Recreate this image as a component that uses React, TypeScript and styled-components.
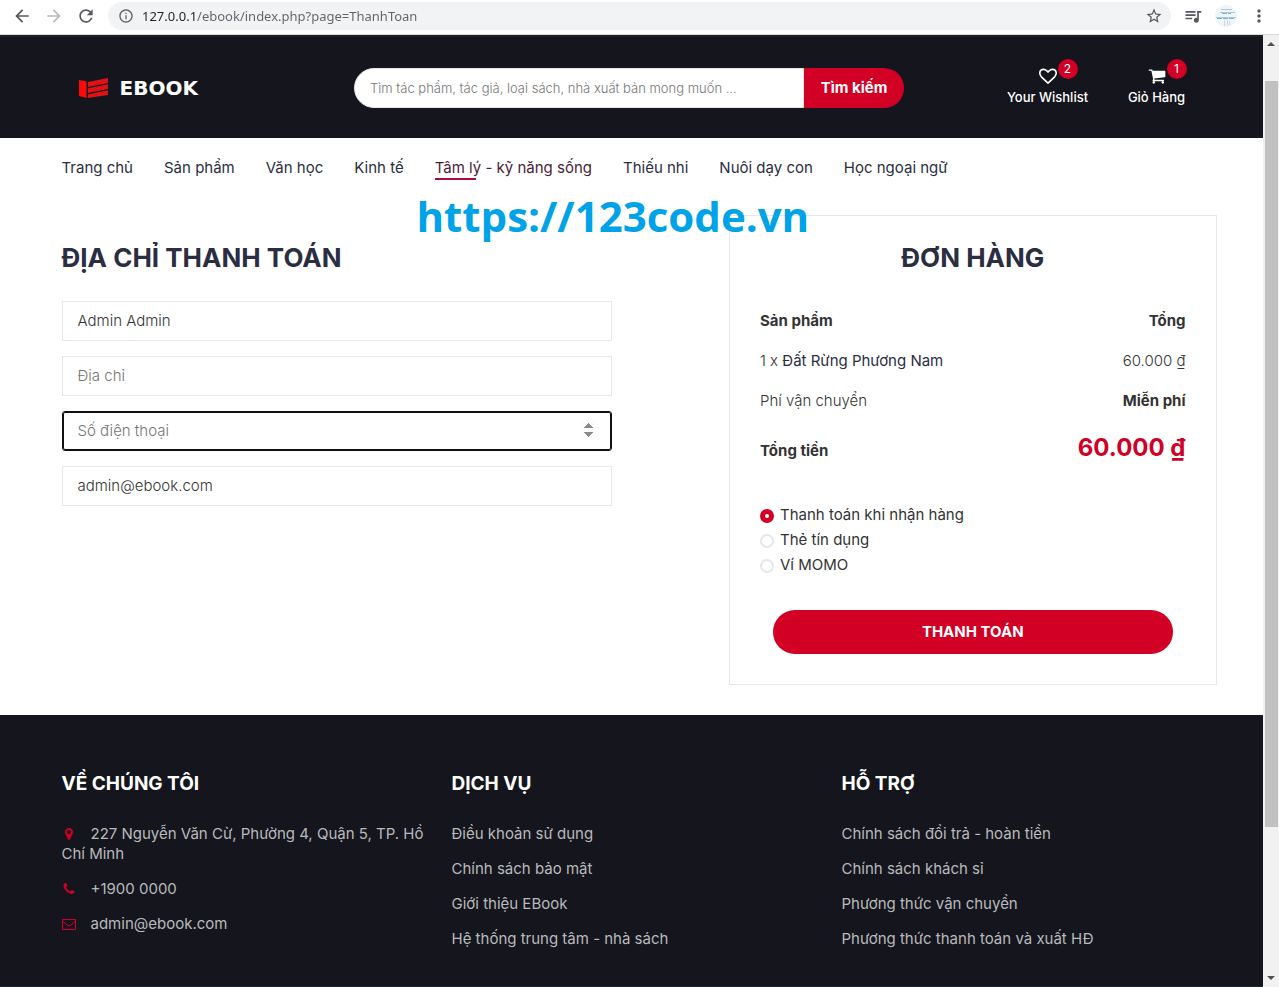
import React from "react";
import styled, { createGlobalStyle } from "styled-components";
import { MdArrowBack, MdArrowForward, MdRefresh, MdInfoOutline, MdStarBorder, MdQueueMusic, MdMoreVert } from "react-icons/md";

const RED = "#d10024";
const DARK = "#15161d";

const GlobalStyle = createGlobalStyle`
  *, *::before, *::after { box-sizing: border-box; }
  body {
    margin: 0;
    background: #fff;
    color: #333;
    font: 400 15px/20px Inter, "Liberation Sans", sans-serif;
  }
  button, input { font: inherit; }
  a { color: inherit; text-decoration: none; }
  h1, h2, h3, ul, p { margin: 0; padding: 0; }
  ul { list-style: none; }
`;

const Browser = styled.div`
  display: flex;
  flex-direction: column;
  min-height: 100vh;
`;

const Toolbar = styled.div`
  display: flex;
  align-items: center;
  height: 35px;
  padding: 0 10px 2px 12px;
  gap: 12px;
  background: #fff;
  border-bottom: 1px solid #d5d7da;
`;

const ToolButton = styled.button<{ $faded?: boolean }>`
  display: flex;
  flex: none;
  padding: 0;
  border: 0;
  background: none;
  color: ${(p) => (p.$faded ? "#b9bbbe" : "#55585c")};
  font-size: 20px;
`;

const AddressBar = styled.div`
  display: flex;
  flex: 1;
  align-items: center;
  gap: 8px;
  height: 28px;
  padding: 0 8px 0 10px;
  border-radius: 14px;
  background: #f1f3f4;
  color: #5f6368;
  font-size: 16px;
`;

const Address = styled.input`
  flex: 1;
  min-width: 0;
  padding: 0;
  border: 0;
  outline: 0;
  background: linear-gradient(to right, #202124 55px, #5f6368 55px);
  background-clip: text;
  color: transparent;
  font: 400 13px/20px "Noto Sans", sans-serif;
`;

const Avatar = styled.svg`
  flex: none;
  width: 22px;
  height: 22px;
`;

const Viewport = styled.div`
  display: flex;
  flex: 1;
`;

const Page = styled.div`
  display: flex;
  flex: 1;
  flex-direction: column;
  min-width: 0;
`;

const ScrollBar = styled.div`
  display: flex;
  flex: none;
  flex-direction: column;
  align-items: center;
  justify-content: space-between;
  width: 16px;
  background: #f1f1f1;
`;

const ScrollThumb = styled.div`
  flex: 1;
  width: 13px;
  margin: 29px 0 143px;
  background: #c1c1c1;
`;

const ScrollArrow = styled.svg`
  flex: none;
  width: 17px;
  height: 17px;
  fill: #505050;
`;

const Container = styled.div`
  width: 100%;
  max-width: 1170px;
  margin: 0 auto;
  padding: 0 15px;
`;

const Header = styled.header`
  background: ${DARK};
  border-top: 2px solid #1e1f29;
`;

const HeaderRow = styled(Container)`
  display: grid;
  grid-template-columns: 1fr 2fr 1fr;
  align-items: center;
  height: 101px;
  padding: 0;
`;

const Logo = styled.a`
  display: flex;
  align-items: center;
  gap: 12px;
  padding-left: 32px;
  color: #fff;
  font: 700 20px/20px "DejaVu Sans", sans-serif;
`;

const SearchForm = styled.form`
  display: flex;
  max-width: 550px;
  height: 40px;
  width: 100%;
  margin-left: 15px;
`;

const SearchInput = styled.input`
  flex: 1;
  min-width: 0;
  padding: 0 15px;
  border: 1px solid #e4e7ed;
  border-radius: 40px 0 0 40px;
  background: #fff;
  font-size: 13px;
  font-weight: 300;
  &::placeholder { color: #757575; opacity: 1; }
`;

const SearchButton = styled.button`
  width: 100px;
  padding: 0;
  border: 0;
  border-radius: 0 40px 40px 0;
  background: ${RED};
  color: #fff;
  font-size: 15px;
  font-weight: 700;
`;

const HeaderLinks = styled.div`
  display: flex;
  justify-content: flex-end;
  gap: 19px;
  padding: 0 15px 2px 0;
`;

const HeaderLink = styled.a`
  position: relative;
  display: flex;
  flex-direction: column;
  align-items: center;
  gap: 2px;
  width: 90px;
  color: #fff;
  font-size: 13px;
  font-weight: 500;
  white-space: nowrap;
  svg { width: 18px; height: 18px; }
`;

const Badge = styled.span`
  position: absolute;
  top: -8px;
  left: 55px;
  width: 20px;
  height: 20px;
  border-radius: 50%;
  background: ${RED};
  font-size: 12px;
  font-weight: 400;
  text-align: center;
`;

const Nav = styled(Container).attrs({ as: "nav" })`
  display: flex;
  flex-wrap: wrap;
  gap: 31px;
  padding-top: 20px;
`;

const NavLink = styled.a<{ $active?: boolean }>`
  position: relative;
  color: ${(p) => (p.$active ? "#4c1b3a" : "#2b2d42")};
  &::after {
    content: "";
    position: absolute;
    top: 20px;
    left: 0;
    width: ${(p) => (p.$active ? "41px" : "0")};
    height: 2px;
    background: #a80c3b;
  }
`;

const Checkout = styled.main`
  position: relative;
  display: grid;
  grid-template-columns: 7fr 5fr;
  width: 100%;
  max-width: 1170px;
  margin: 37px auto 30px;
`;

const Watermark = styled.div`
  position: absolute;
  top: -27px;
  left: 370px;
  color: #00a2e8;
  font: 700 42px/56px "Open Sans", sans-serif;
  white-space: nowrap;
`;

const Title = styled.h2<{ $center?: boolean }>`
  margin-bottom: 31px;
  color: #2b2d42;
  font-size: 26px;
  line-height: 24px;
  font-weight: 700;
  text-align: ${(p) => (p.$center ? "center" : "left")};
`;

const BillingForm = styled.form`
  display: flex;
  flex-direction: column;
  gap: 15px;
  padding: 31px 15px 0;
  ${Title} { margin-bottom: 16px; }
`;

const Field = styled.input`
  width: 100%;
  max-width: 550px;
  height: 40px;
  padding: 0 15px 2px;
  border: 1px solid #e4e7ed;
  border-radius: 0;
  background: #fff;
  color: #333;
  font-weight: 300;
  &::placeholder { color: #757575; opacity: 1; }
  &:focus {
    border-color: #101010;
    border-radius: 3px;
    outline: 1px solid #101010;
    outline-offset: -2px;
  }
  &::-webkit-inner-spin-button { opacity: 1; }
`;

const Order = styled.section`
  padding: 30px;
  border: 1px solid #e4e7ed;
`;

const OrderTable = styled.table`
  width: 100%;
  border-collapse: collapse;
  th, td { height: 40px; padding: 0; text-align: left; font-weight: 300; }
  th { font-weight: 700; }
  td:last-child, th:last-child { text-align: right; }
  tfoot th, tfoot td { height: 60px; }
  a { color: #2b2d42; font-weight: 400; }
`;

const Total = styled.strong`
  display: block;
  padding-bottom: 6px;
  color: ${RED};
  font-size: 24px;
  line-height: 24px;
  font-weight: 700;
`;

const Payments = styled.div`
  display: flex;
  flex-direction: column;
  margin: 21px 0 33px;
`;

const Payment = styled.label`
  display: flex;
  align-items: center;
  gap: 6px;
  height: 25px;
`;

const Radio = styled.input`
  appearance: none;
  width: 14px;
  height: 14px;
  margin: 2px 0 0;
  border: 2px solid #e4e7ed;
  border-radius: 50%;
  background: #fff;
  &:checked { border: 5px solid ${RED}; }
`;

const PayButton = styled.button`
  display: block;
  width: 100%;
  max-width: 400px;
  height: 44px;
  margin: 0 auto;
  border: 0;
  border-radius: 40px;
  background: ${RED};
  color: #fff;
  font-size: 15px;
  font-weight: 700;
`;

const Footer = styled.footer`
  flex: 1;
  padding: 59px 0 37px;
  background: ${DARK};
  border-bottom: 1px solid #1c2a38;
  color: #b9babc;
`;

const FooterRow = styled(Container)`
  display: grid;
  grid-template-columns: repeat(3, 1fr);
  gap: 15px;
  padding-right: 0;
`;

const FooterTitle = styled.h3`
  margin-bottom: 30px;
  color: #fff;
  font-size: 19px;
  line-height: 20px;
  font-weight: 700;
`;

const FooterList = styled.ul`
  display: flex;
  flex-direction: column;
  gap: 15px;
  svg {
    width: 14px;
    height: 14px;
    margin-right: 15px;
    color: ${RED};
    vertical-align: -2px;
  }
`;

const LogoMark = () => (
  <svg width="29" height="20" viewBox="0 0 29 20">
    <path fill="#fb0a0c" d="M0 2l7.500 1.500v16.500l-7.500-2z" />
    <path fill="#e01215" d="M9 4L29 0v5L9 9zM9 10.300L29 6.300v4.700L9 15zM9 16.300l20-4v4.700L9 20z" />
  </svg>
);

const HeartIcon = () => (
  <svg viewBox="0 0 20 20" fill="none" stroke="currentColor" strokeWidth="1.800" strokeLinejoin="round">
    <path d="M10 18L2.600 10.900C.5 8.600.3 5.200 2.200 3.600c2.300-1.900 5.600-.9 7.800 2 2.200-2.900 5.500-3.900 7.800-2 1.900 1.600 1.700 5-.4 7.300z" />
  </svg>
);

const CartIcon = () => (
  <svg viewBox="0 0 1792 1792" fill="currentColor">
    <path d="M704 1536q0 52-38 90t-90 38-90-38-38-90 38-90 90-38 90 38 38 90zm896 0q0 52-38 90t-90 38-90-38-38-90 38-90 90-38 90 38 38 90zm128-1088v512q0 24-16.500 42.500t-40.500 21.500l-1044 122q13 60 13 70 0 16-24 64h920q26 0 45 19t19 45-19 45-45 19h-1024q-26 0-45-19t-19-45q0-11 8-31.500t16-36 21.500-40 15.500-29.500l-177-823h-204q-26 0-45-19t-19-45 19-45 45-19h256q16 0 28.500 6.500t19.500 15.500 13 24.500 8 26 5.500 29.500 4.500 26h1201q26 0 45 19t19 45z" />
  </svg>
);

const PinIcon = () => (
  <svg viewBox="0 0 1792 1792" fill="currentColor">
    <path d="M1152 640q0-106-75-181t-181-75-181 75-75 181 75 181 181 75 181-75 75-181zm256 0q0 109-33 179l-364 774q-16 33-47.500 52t-67.500 19-67.500-19-46.500-52l-365-774q-33-70-33-179 0-212 150-362t362-150 362 150 150 362z" />
  </svg>
);

const PhoneIcon = () => (
  <svg viewBox="0 0 1792 1792" fill="currentColor">
    <path d="M1600 1240q0 27-10 70.500t-21 68.500q-21 50-122 106-94 51-186 51-27 0-53-3.500t-57.500-12.500-47-14.500-55.500-20.500-49-18q-98-35-175-83-127-79-264-216t-216-264q-48-77-83-175-3-9-18-49t-20.500-55.500-14.500-47-12.500-57.500-3.500-53q0-92 51-186 56-101 106-122 25-11 68.500-21t70.500-10q14 0 21 3 18 6 53 76 11 19 30 54t35 63.500 31 53.500q3 4 17.500 25t21.500 35.500 7 28.500q0 20-28.500 50t-62 55-62 53-28.500 46q0 9 5 22.500t8.500 20.500 14 24 11.500 19q76 137 174 235t235 174q2 1 19 11.500t24 14 20.500 8.500 22.500 5q18 0 46-28.500t53-62 55-62 50-28.500q14 0 28.500 7t35.500 21.500 25 17.500q25 15 53.500 31t63.500 35 54 30q70 35 76 53 3 7 3 21z" />
  </svg>
);

const MailIcon = () => (
  <svg viewBox="0 0 14 14" fill="none" stroke="currentColor">
    <path d="M.5 2.500h13v10H.5zM.5 4l5 4.300q1.500 1 3 0l5-4.300" />
  </svg>
);

const categories = ["Trang chủ", "Sản phẩm", "Văn học", "Kinh tế", "Tâm lý - kỹ năng sống", "Thiếu nhi", "Nuôi dạy con", "Học ngoại ngữ"];
const payments = ["Thanh toán khi nhận hàng", "Thẻ tín dụng", "Ví MOMO"];
const services = ["Điều khoản sử dụng", "Chính sách bảo mật", "Giới thiệu EBook", "Hệ thống trung tâm - nhà sách"];
const support = ["Chính sách đổi trả - hoàn tiền", "Chính sách khách sỉ", "Phương thức vận chuyển", "Phương thức thanh toán và xuất HĐ"];

const LinkColumn = ({ title, links }: { title: string; links: string[] }) => (
  <div>
    <FooterTitle>{title}</FooterTitle>
    <FooterList>
      {links.map((text) => (
        <li key={text}><a href="#">{text}</a></li>
      ))}
    </FooterList>
  </div>
);

export default function App() {
  return (
    <Browser>
      <GlobalStyle />
      <Toolbar>
        <ToolButton aria-label="Back"><MdArrowBack /></ToolButton>
        <ToolButton aria-label="Forward" $faded><MdArrowForward /></ToolButton>
        <ToolButton aria-label="Reload"><MdRefresh /></ToolButton>
        <AddressBar>
          <MdInfoOutline />
          <Address aria-label="Address" defaultValue="127.0.0.1/ebook/index.php?page=ThanhToan" />
          <ToolButton aria-label="Bookmark"><MdStarBorder size={18} /></ToolButton>
        </AddressBar>
        <ToolButton aria-label="Media"><MdQueueMusic /></ToolButton>
        <Avatar viewBox="0 0 22 22">
          <circle cx="11" cy="11" r="11" fill="#f0f5f9" />
          <path stroke="#a9c9e0" d="M6 4.500h11M5 7.500h15M1 12.500h20" />
          <path stroke="#7faed0" d="M2 13.500h18M7 8.500h9" strokeDasharray="5 1" />
          <path stroke="#cfd6dc" d="M9.500 15v6M12.500 15v5M14.500 16v4" />
        </Avatar>
        <ToolButton aria-label="Menu"><MdMoreVert /></ToolButton>
      </Toolbar>
      <Viewport>
        <Page>
          <Header>
            <HeaderRow>
              <Logo href="#"><LogoMark />EBOOK</Logo>
              <SearchForm>
                <SearchInput aria-label="Tìm kiếm" placeholder="Tìm tác phẩm, tác giả, loại sách, nhà xuất bản mong muốn ..." />
                <SearchButton type="button">Tìm kiếm</SearchButton>
              </SearchForm>
              <HeaderLinks>
                <HeaderLink href="#"><HeartIcon />Your Wishlist<Badge>2</Badge></HeaderLink>
                <HeaderLink href="#"><CartIcon />Giỏ Hàng<Badge>1</Badge></HeaderLink>
              </HeaderLinks>
            </HeaderRow>
          </Header>
          <Nav>
            {categories.map((name, i) => (
              <NavLink key={name} href="#" $active={i === 4}>{name}</NavLink>
            ))}
          </Nav>
          <Checkout>
            <BillingForm>
              <Title>ĐỊA CHỈ THANH TOÁN</Title>
              <Field aria-label="Họ tên" defaultValue="Admin Admin" />
              <Field aria-label="Địa chỉ" placeholder="Địa chỉ" />
              <Field aria-label="Số điện thoại" type="number" placeholder="Số điện thoại" autoFocus />
              <Field aria-label="Email" type="email" defaultValue="admin@ebook.com" />
            </BillingForm>
            <Order>
              <Title $center>ĐƠN HÀNG</Title>
              <OrderTable>
                <thead>
                  <tr><th scope="col">Sản phẩm</th><th scope="col">Tổng</th></tr>
                </thead>
                <tbody>
                  <tr><td>1 x <a href="#">Đất Rừng Phương Nam</a></td><td>60.000 ₫</td></tr>
                  <tr><td>Phí vận chuyển</td><th>Miễn phí</th></tr>
                </tbody>
                <tfoot>
                  <tr><th scope="row">Tổng tiền</th><td><Total>60.000 ₫</Total></td></tr>
                </tfoot>
              </OrderTable>
              <Payments>
                {payments.map((name, i) => (
                  <Payment key={name}><Radio type="radio" name="payment" defaultChecked={i === 0} />{name}</Payment>
                ))}
              </Payments>
              <PayButton type="button">THANH TOÁN</PayButton>
            </Order>
            <Watermark>https://123code.vn</Watermark>
          </Checkout>
          <Footer>
            <FooterRow>
              <div>
                <FooterTitle>VỀ CHÚNG TÔI</FooterTitle>
                <FooterList>
                  <li><a href="#"><PinIcon />227 Nguyễn Văn Cừ, Phường 4, Quận 5, TP. Hồ Chí Minh</a></li>
                  <li><a href="#"><PhoneIcon />+1900 0000</a></li>
                  <li><a href="#"><MailIcon />admin@ebook.com</a></li>
                </FooterList>
              </div>
              <LinkColumn title="DỊCH VỤ" links={services} />
              <LinkColumn title="HỖ TRỢ" links={support} />
            </FooterRow>
          </Footer>
        </Page>
        <ScrollBar>
          <ScrollArrow viewBox="0 0 17 17"><path d="M4 11l4-4 4 4z" /></ScrollArrow>
          <ScrollThumb />
          <ScrollArrow viewBox="0 0 17 17"><path d="M4 6l4 4 4-4z" /></ScrollArrow>
        </ScrollBar>
      </Viewport>
    </Browser>
  );
}
